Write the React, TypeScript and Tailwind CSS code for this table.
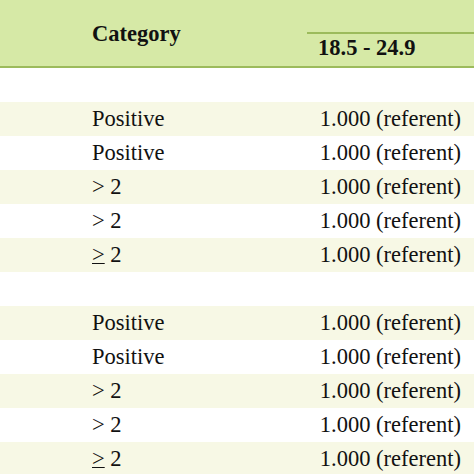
import React from "react";

const rows = ["Positive", "Positive", "> 2", "> 2", "≥ 2"];

function Row({ label, striped }: { label: string; striped: boolean }) {
  return (
    <div className={`flex h-[34px] leading-[34px] ${striped ? "bg-[#f7f8e5]" : "bg-white"}`}>
      <div className="w-[307px] pl-[92px]">
        {label === "≥ 2" ? (
          <span>
            <span className="underline decoration-1 underline-offset-[1px]">&gt;</span> 2
          </span>
        ) : (
          label
        )}
      </div>
      <div className="flex-1 text-right pr-[13px]">1.000 (referent)</div>
    </div>
  );
}

export default function App() {
  return (
    <div className="w-[474px] h-[474px] overflow-hidden bg-white text-[#111] text-[22.5px] font-['Liberation_Serif']">
      <div className="flex h-[68px] bg-[#d6e9a6] border-b-2 border-[#9cbb5c] font-bold">
        <div className="w-[307px] pl-[92px] pt-[23px] leading-none">Category</div>
        <div className="flex-1 flex flex-col">
          <div className="h-[34px] border-b-2 border-[#9cbb5c]"></div>
          <div className="pl-[11px] pt-[3px] leading-none">18.5 - 24.9</div>
        </div>
      </div>
      <div className="h-[34px]"></div>
      {rows.map((r, i) => (
        <Row key={"a" + i} label={r} striped={i % 2 === 0} />
      ))}
      <div className="h-[34px]"></div>
      {rows.map((r, i) => (
        <Row key={"b" + i} label={r} striped={i % 2 === 0} />
      ))}
    </div>
  );
}
